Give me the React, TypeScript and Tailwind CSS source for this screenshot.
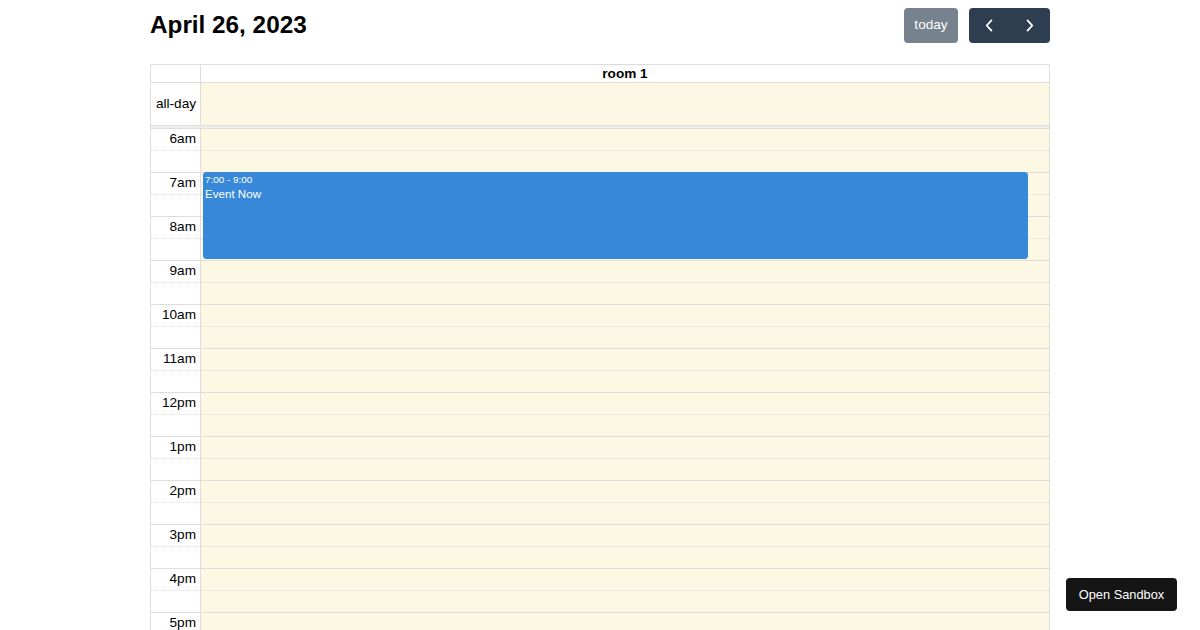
import React from "react";

const hours = [
  "6am", "7am", "8am", "9am", "10am", "11am", "12pm",
  "1pm", "2pm", "3pm", "4pm", "5pm", "6pm", "7pm", "8pm", "9pm", "10pm", "11pm",
];

function Chevron({ dir }: { dir: "left" | "right" }) {
  return (
    <svg width="8" height="13" viewBox="0 0 8 13" fill="none">
      <path
        d={dir === "left" ? "M6.3 1.5 L1.8 6.5 L6.3 11.5" : "M1.7 1.5 L6.2 6.5 L1.7 11.5"}
        stroke="white"
        strokeWidth="1.8"
        strokeLinecap="square"
      />
    </svg>
  );
}

export default function App() {
  const slots = hours.flatMap((h) => [
    { label: h, minor: false },
    { label: "", minor: true },
  ]);

  return (
    <div
      className="min-h-screen bg-white text-[13.6px] text-black"
      style={{ fontFamily: '"Liberation Sans", Arial, sans-serif' }}
    >
      <div className="mx-auto w-[900px] pt-[8px]">
        {/* toolbar */}
        <div className="flex h-[35px] items-center justify-between">
          <h2 className="text-[24.3px] font-bold leading-none">April 26, 2023</h2>
          <div className="flex items-center gap-[11px]">
            <button className="h-[35px] w-[54px] rounded-[4px] bg-[#76828d] text-[13.6px] text-white">
              today
            </button>
            <div className="flex h-[35px] w-[81px] overflow-hidden rounded-[4px] bg-[#2c3e50]">
              <button className="flex flex-1 items-center justify-center">
                <Chevron dir="left" />
              </button>
              <button className="flex flex-1 items-center justify-center">
                <Chevron dir="right" />
              </button>
            </div>
          </div>
        </div>

        {/* grid */}
        <div className="mt-[21px] border border-[#ddd]">
          <div className="flex h-[18px] border-b border-[#ddd]">
            <div className="w-[50px] border-r border-[#ddd]" />
            <div className="flex flex-1 items-center justify-center text-[13.6px] font-bold leading-none">
              room 1
            </div>
          </div>

          <div className="flex h-[43px] border-b border-[#ddd]">
            <div className="flex w-[50px] items-center justify-end border-r border-[#ddd] pr-[4px]">
              all-day
            </div>
            <div className="flex-1 bg-[#fcf8e3]" />
          </div>

          <div className="h-[3px] border-b border-[#ddd] bg-[#eee]" />

          <div className="flex">
            <div className="w-[50px] border-r border-[#ddd]">
              {slots.map((s, i) => (
                <div
                  key={i}
                  className={
                    s.minor
                      ? "h-[22px] border-b border-solid border-[#ddd]"
                      : "flex h-[22px] items-center justify-end border-b border-dotted border-[#ddd] pr-[4px]"
                  }
                >
                  {s.label}
                </div>
              ))}
            </div>
            <div className="relative flex-1 bg-[#fcf8e3]">
              {slots.map((s, i) => (
                <div
                  key={i}
                  className={
                    s.minor
                      ? "h-[22px] border-b border-solid border-[#ddd]"
                      : "h-[22px] border-b border-dotted border-[#ddd]"
                  }
                />
              ))}
              <div className="absolute left-[2px] right-[21px] top-[43px] h-[87px] rounded-[3px] border border-[#3788d8] bg-[#3788d8] px-[1px] text-white">
                <div className="text-[9.9px] leading-[13px]">7:00 - 9:00</div>
                <div className="text-[11.6px] leading-[15px]">Event Now</div>
              </div>
            </div>
          </div>
        </div>
      </div>

      <button className="fixed bottom-[19px] right-[23px] h-[33px] w-[111px] rounded-[4px] bg-[#151515] text-[12.8px] text-white">
        Open Sandbox
      </button>
    </div>
  );
}
